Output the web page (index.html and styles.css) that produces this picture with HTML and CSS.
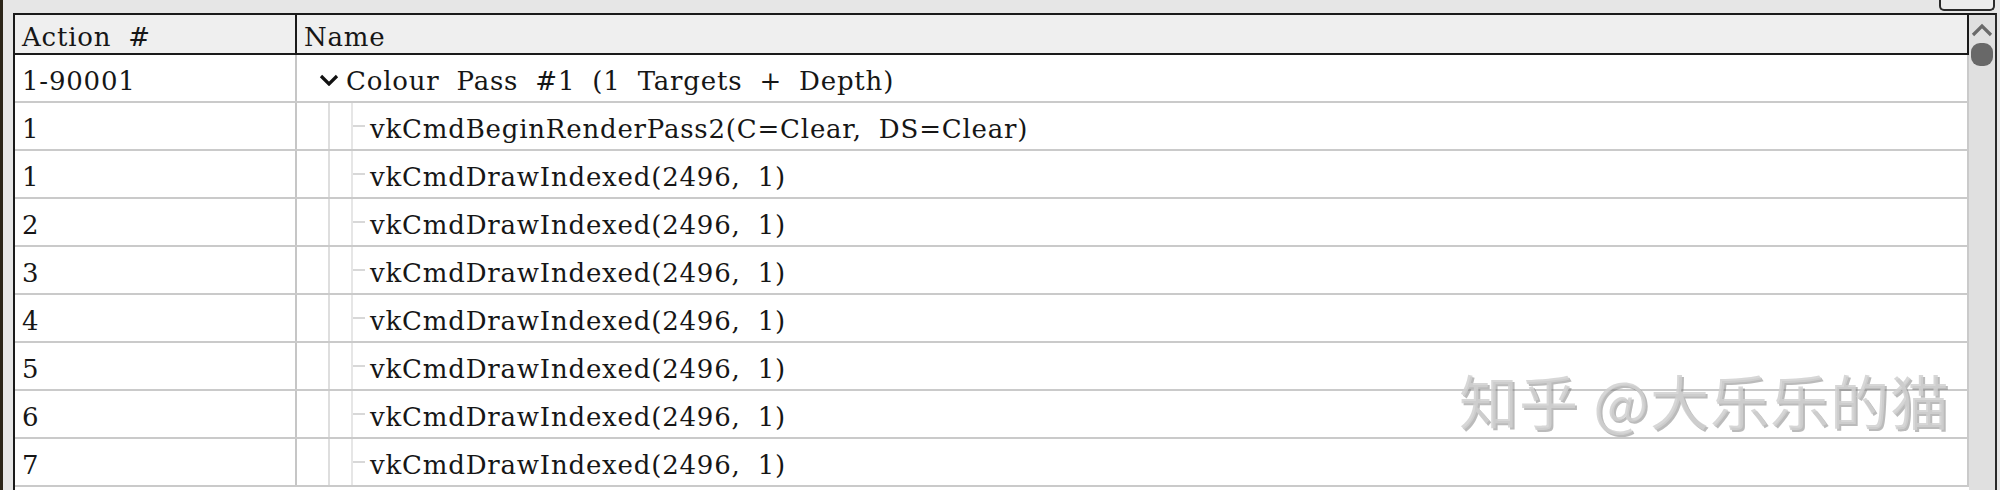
FILE: index.html
```html
<!DOCTYPE html>
<html>
<head>
<meta charset="utf-8">
<link rel="stylesheet" href="styles.css">
</head>
<body>
<div class="window">
  <div class="topbar"><div class="tabbox"></div></div>
  <div class="frame">
    <div class="table">
      <div class="head">
        <div class="c1">Action #</div>
        <div class="c2">Name</div>
      </div>
      <div class="row">
        <div class="c1">1-90001</div>
        <div class="c2 parent">
          <svg class="chev" width="20" height="12" viewBox="0 0 20 12"><polyline points="2,2 10,10 18,2" fill="none" stroke="#111" stroke-width="3.2"/></svg>
          <span>Colour Pass #1 (1 Targets + Depth)</span>
        </div>
      </div>
      <div class="row">
        <div class="c1">1</div>
        <div class="c2 child"><i class="ind"></i><i class="vl"></i><i class="br"></i><span>vkCmdBeginRenderPass2(C=Clear, DS=Clear)</span></div>
      </div>
      <div class="row">
        <div class="c1">1</div>
        <div class="c2 child"><i class="ind"></i><i class="vl"></i><i class="br"></i><span>vkCmdDrawIndexed(2496, 1)</span></div>
      </div>
      <div class="row">
        <div class="c1">2</div>
        <div class="c2 child"><i class="ind"></i><i class="vl"></i><i class="br"></i><span>vkCmdDrawIndexed(2496, 1)</span></div>
      </div>
      <div class="row">
        <div class="c1">3</div>
        <div class="c2 child"><i class="ind"></i><i class="vl"></i><i class="br"></i><span>vkCmdDrawIndexed(2496, 1)</span></div>
      </div>
      <div class="row">
        <div class="c1">4</div>
        <div class="c2 child"><i class="ind"></i><i class="vl"></i><i class="br"></i><span>vkCmdDrawIndexed(2496, 1)</span></div>
      </div>
      <div class="row">
        <div class="c1">5</div>
        <div class="c2 child"><i class="ind"></i><i class="vl"></i><i class="br"></i><span>vkCmdDrawIndexed(2496, 1)</span></div>
      </div>
      <div class="row">
        <div class="c1">6</div>
        <div class="c2 child"><i class="ind"></i><i class="vl"></i><i class="br"></i><span>vkCmdDrawIndexed(2496, 1)</span></div>
      </div>
      <div class="row">
        <div class="c1">7</div>
        <div class="c2 child"><i class="ind"></i><i class="vl"></i><i class="br"></i><span>vkCmdDrawIndexed(2496, 1)</span></div>
      </div>
    </div>
    <div class="scrollbar">
      <svg class="up" width="22" height="14" viewBox="0 0 22 14"><polyline points="2,12 11,3 20,12" fill="none" stroke="#6a6a6a" stroke-width="3.2"/></svg>
      <div class="thumb"></div>
    </div>
  </div>
  <div class="watermark">知乎 @大乐乐的猫</div>
</div>
</body>
</html>
```
FILE: styles.css
```css
html, body {
  margin: 0;
  padding: 0;
}
body {
  width: 2000px;
  height: 490px;
  overflow: hidden;
  background: #e6e6e6;
}
.window {
  position: relative;
  width: 2000px;
  height: 490px;
  box-sizing: border-box;
  border-left: 3px solid #2b2418;
  padding: 0 3px 0 10px;
  background: #e6e6e6;
  display: flex;
  flex-direction: column;
  overflow: hidden;
}
.topbar {
  height: 13px;
  display: flex;
  justify-content: flex-end;
  flex: none;
}
.tabbox {
  width: 52px;
  height: 9px;
  margin-right: 2px;
  border: 2px solid #2a2a2a;
  border-top: none;
  border-radius: 0 0 5px 5px;
  background: #ececec;
}
.frame {
  display: flex;
  border-top: 2px solid #1a1a1a;
  border-left: 2px solid #1a1a1a;
  border-right: 2px solid #2a2a2a;
  flex: 1;
  min-height: 0;
}
.table {
  flex: 1;
  display: flex;
  flex-direction: column;
  font-family: "DejaVu Serif", "Noto Sans CJK SC", serif;
  font-size: 26px;
  letter-spacing: 0.8px;
  word-spacing: 8px;
  color: #161616;
  background: #ffffff;
}
.head {
  display: flex;
  height: 38px;
  border-bottom: 2px solid #1a1a1a;
  border-right: 2px solid #1a1a1a;
  background: #efefef;
  flex: none;
}
.head .c1 {
  width: 273px;
  padding-left: 7px;
  padding-top: 5px;
  border-right: 2px solid #1a1a1a;
  display: flex;
  align-items: center;
}
.head .c2 {
  flex: 1;
  padding-left: 7px;
  padding-top: 5px;
  display: flex;
  align-items: center;
}
.row {
  display: flex;
  height: 46px;
  border-bottom: 2px solid #cacaca;
  border-right: 2px solid #cacaca;
  flex: none;
}
.row .c1 {
  width: 273px;
  padding-left: 7px;
  padding-top: 5px;
  border-right: 2px solid #c6c6c6;
  display: flex;
  align-items: center;
}
.row .c2 {
  flex: 1;
  display: flex;
  align-items: stretch;
}
.c2.parent {
  padding-left: 22px;
  align-items: center;
}
.chev {
  margin-right: 7px;
  margin-top: 4px;
}
.c2 span {
  align-self: center;
  white-space: pre;
  padding-top: 5px;
}
.ind {
  width: 31px;
}
.vl {
  width: 21px;
  border-left: 2px solid #dedede;
}
.br {
  width: 17px;
  border-left: 2px solid #e6e6e6;
  background: linear-gradient(#d8d8d8, #d8d8d8) no-repeat 0 50% / 12px 2px;
}
.scrollbar {
  width: 26px;
  background: #e0e0e0;
  display: flex;
  flex-direction: column;
  align-items: center;
  flex: none;
}
.up {
  margin-top: 8px;
}
.thumb {
  margin-top: 6px;
  width: 22px;
  height: 23px;
  border-radius: 9px;
  background: #686868;
}
.watermark {
  position: absolute;
  left: 1456px;
  top: 365px;
  font-family: "Noto Sans CJK SC", sans-serif;
  font-size: 59px;
  letter-spacing: 1px;
  line-height: 1.2;
  white-space: pre;
  color: rgba(208, 208, 208, 0.85);
  text-shadow: 2px 2px 0 rgba(120, 120, 120, 0.5);
}
```
